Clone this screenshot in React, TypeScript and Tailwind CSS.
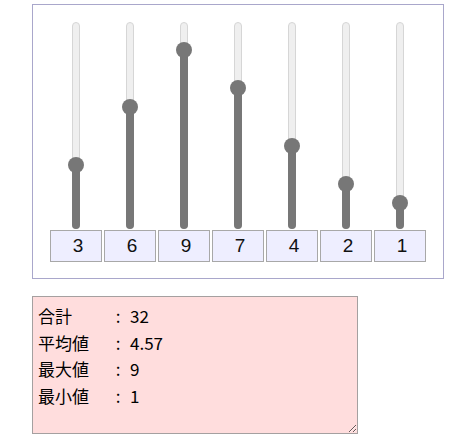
import React from "react";

const values = [3, 6, 9, 7, 4, 2, 1];

function Slider({ v }: { v: number }) {
  const step = 19.1;
  const fill = 8 + v * step;
  const thumbTop = 191 - v * step;
  return (
    <div className="flex h-[207px] w-[52px] justify-center">
      <div className="relative h-[207px] w-[8px] rounded-full border border-[#d6d6d6] bg-[#efefef]">
        <div
          className="absolute left-[-1px] w-[8px] rounded-b-full bg-[#777777]"
          style={{ height: fill, bottom: -1 }}
        />
        <div
          className="absolute left-[-5px] h-[16px] w-[16px] rounded-full bg-[#777777]"
          style={{ top: thumbTop }}
        />
      </div>
    </div>
  );
}

export default function App() {
  const rows = [
    ["合計", "32"],
    ["平均値", "4.57"],
    ["最大値", "9"],
    ["最小値", "1"],
  ];
  return (
    <div className="pl-[32px] pt-[4px]">
      <div className="flex h-[275px] w-[412px] flex-col border border-[#a9a7cb] bg-white pl-[17px] pt-[17px]">
        <div className="flex gap-[2px]">
          {values.map((v, i) => (
            <Slider key={i} v={v} />
          ))}
        </div>
        <div className="mt-[1px] flex gap-[2px]">
          {values.map((v, i) => (
            <div
              key={i}
              className="flex h-[32px] w-[52px] items-center justify-center border border-[#a8a8a8] bg-[#eeeeff] pl-[4px] text-[19px] text-[#111]"
              style={{ fontFamily: '"Liberation Sans", Arial, sans-serif' }}
            >
              {v}
            </div>
          ))}
        </div>
      </div>
      <div
        className="mt-[17px] h-[138px] w-[326px] resize overflow-auto border border-[#a5a0a0] bg-[#ffdddd] pl-[5px] pt-[6px] text-[17px] leading-[26.67px] text-[#000]"
        style={{ fontFamily: '"Noto Sans CJK JP", "Noto Sans", sans-serif' }}
      >
        {rows.map(([k, val]) => (
          <div key={k} className="flex">
            <span className="w-[76px]">{k}</span>
            <span className="w-[8px] text-center">:</span>
            <span className="ml-[8px]">{val}</span>
          </div>
        ))}
      </div>
    </div>
  );
}
